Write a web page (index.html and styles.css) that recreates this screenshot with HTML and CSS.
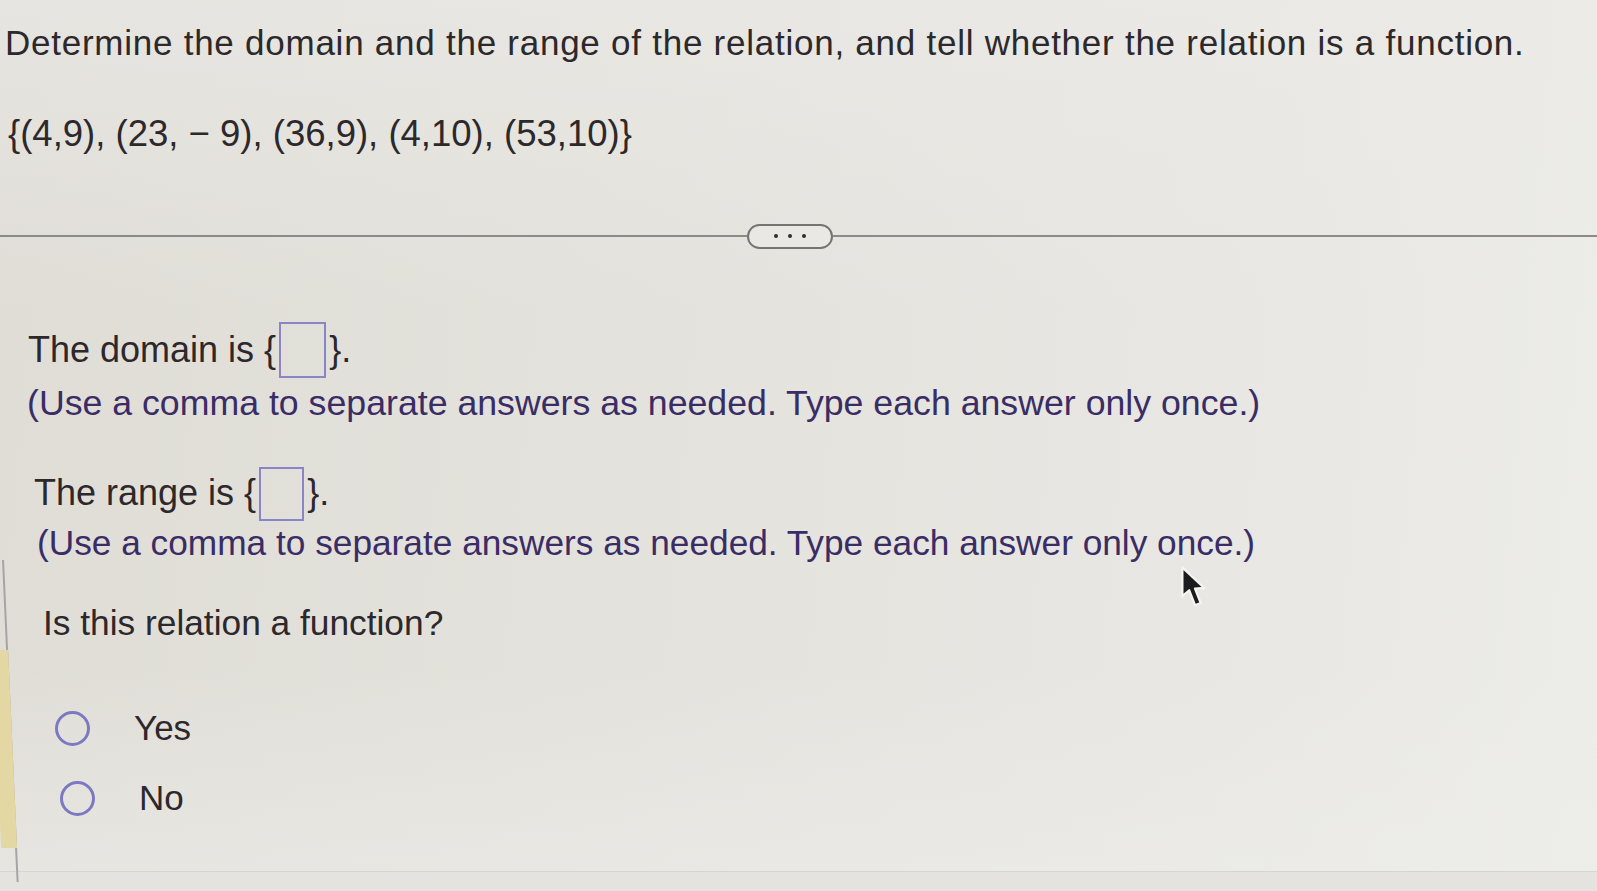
FILE: index.html
```html
<!DOCTYPE html>
<html lang="en">
<head>
<meta charset="utf-8">
<title>Domain and range</title>
<link rel="stylesheet" href="styles.css">
</head>
<body>
<div class="page">
  <section class="question">
    <p class="prompt">Determine the domain and the range of the relation, and tell whether the relation is a function.</p>
    <p class="set">{(4,9), (23, − 9), (36,9), (4,10), (53,10)}</p>
  </section>

  <div class="divider">
    <span class="rule"></span>
    <button class="more" type="button" aria-label="more"><i></i><i></i><i></i></button>
    <span class="rule"></span>
  </div>

  <section class="answers">
    <p class="field domain">The domain is {<span class="box box-domain"></span>}.</p>
    <p class="hint hint-domain">(Use a comma to separate answers as needed. Type each answer only once.)</p>
    <p class="field range">The range is {<span class="box box-range"></span>}.</p>
    <p class="hint hint-range">(Use a comma to separate answers as needed. Type each answer only once.)</p>
    <p class="ask">Is this relation a function?</p>
    <ul class="options">
      <li class="option opt-yes"><span class="radio"></span><span class="label">Yes</span></li>
      <li class="option opt-no"><span class="radio"></span><span class="label">No</span></li>
    </ul>
  </section>

  <div class="footer-band"></div>

  <div class="edge"><span class="edge-yellow"></span></div>

  <svg class="cursor" width="30" height="46" viewBox="0 0 26 40" aria-hidden="true">
    <path d="M2 2 L2 27 L8 22 L13 35 L18 33 L13 20.5 L21 20 Z" fill="#1c1c1e" stroke="#f4f4f2" stroke-width="2" stroke-linejoin="round"/>
  </svg>
</div>
</body>
</html>
```

FILE: styles.css
```css
* { box-sizing: border-box; }

html, body {
  margin: 0;
  padding: 0;
  height: 100%;
}

body {
  font-family: "Liberation Sans", Arial, Helvetica, sans-serif;
  color: #2c282b;
  background: #e5e3de;
  overflow: hidden;
}

.page {
  position: relative;
  width: 1597px;
  height: 891px;
  overflow: hidden;
  background:
    linear-gradient(180deg, rgba(236,235,232,0.55) 0%, rgba(236,235,232,0) 35%, rgba(236,235,232,0) 75%, rgba(238,238,235,0.5) 100%),
    linear-gradient(95deg, #e0ddd7 0%, #e4e2dc 40%, #e8e7e3 75%, #ecece9 100%);
  display: flex;
  flex-direction: column;
}

p { margin: 0; }

.question {
  padding-top: 24px;
}

.prompt {
  font-size: 35px;
  line-height: 37px;
  margin-left: 5px;
  letter-spacing: 0.75px;
  white-space: nowrap;
}

.set {
  font-size: 36.5px;
  line-height: 40px;
  margin-top: 53px;
  margin-left: 8px;
}

.divider {
  margin-top: 70px;
  height: 24px;
  display: flex;
  align-items: center;
}

.rule {
  flex: 1;
  height: 2px;
  background: #8d8b88;
}

.rule:first-child { flex: 0 0 747px; }

.more {
  width: 86px;
  height: 25px;
  border: 2px solid #757473;
  border-radius: 13px;
  background: #e9e8e5;
  padding: 0;
  display: flex;
  align-items: center;
  justify-content: center;
  gap: 10px;
}

.more i {
  width: 4px;
  height: 4px;
  border-radius: 50%;
  background: #2d2d30;
}

.answers {
  margin-top: 74px;
  display: flex;
  flex-direction: column;
}

.field {
  font-size: 36px;
  line-height: 40px;
}

.box {
  display: inline-block;
  border: 2px solid #8985c6;
  background: transparent;
}

.box-domain {
  width: 47px;
  height: 56px;
  vertical-align: -16px;
  margin: 0 3px;
}

.box-range {
  width: 45px;
  height: 54px;
  vertical-align: -16px;
  margin: 0 3px;
}

.domain { margin-left: 28px; }

.hint {
  line-height: 40px;
  color: #3a2d66;
  white-space: nowrap;
}

.hint-domain {
  font-size: 35.7px;
  margin-top: 5px;
  margin-left: 27px;
}

.range {
  margin-top: 44px;
  margin-left: 34px;
}

.hint-range {
  font-size: 35.25px;
  margin-top: 2px;
  margin-left: 37px;
}

.ask {
  font-size: 35.3px;
  line-height: 37px;
  margin-top: 41px;
  margin-left: 43px;
}

.options {
  list-style: none;
  margin: 67px 0 0;
  padding: 0;
  display: flex;
  flex-direction: column;
  gap: 30px;
}

.option {
  display: flex;
  align-items: center;
  height: 40px;
  font-size: 35px;
}

.radio {
  flex: none;
  width: 35px;
  height: 35px;
  border: 3px solid #7c79c3;
  border-radius: 50%;
  background: transparent;
  margin-right: 44px;
}

.opt-yes { margin-left: 55px; }
.opt-no { margin-left: 60px; }

.footer-band {
  margin-top: auto;
  height: 20px;
  border-top: 1px solid #d6d5d1;
  background: #e4e3e0;
}

.edge {
  position: absolute;
  left: -12px;
  top: 560px;
  width: 16px;
  height: 322px;
  border-right: 2px solid #a7a4a6;
  transform: skewX(2.6deg);
  transform-origin: top left;
}

.edge-yellow {
  display: block;
  margin-top: 90px;
  height: 198px;
  width: 16px;
  background: #e3d7a3;
}

.cursor {
  position: absolute;
  left: 1180px;
  top: 565px;
}
```
